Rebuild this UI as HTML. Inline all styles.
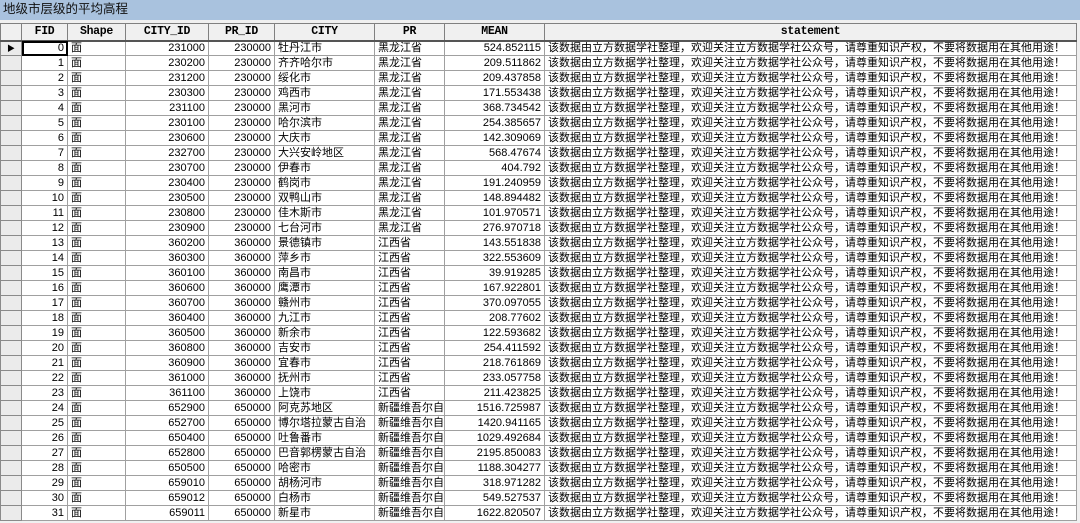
<!DOCTYPE html>
<html><head><meta charset="utf-8"><style>
*{margin:0;padding:0;box-sizing:border-box}
body{width:1080px;height:523px;overflow:hidden;background:#f0f0f0;font-family:"Liberation Sans","Noto Sans CJK SC",sans-serif;font-size:11px;color:#000;position:relative}
.title{position:absolute;left:0;top:0;width:1080px;height:20px;background:#a9c2de;font-size:12.5px;line-height:18px;padding-left:3px;color:#111}
table{position:absolute;left:0;top:23px;border-collapse:collapse;table-layout:fixed;width:1076px;background:#fff}
td,th{border:1px solid #a0a0a0;height:15px;line-height:13px;padding:0 3px;white-space:nowrap;overflow:hidden}
th{background:#f0f0f0;font-family:"Liberation Mono","DejaVu Sans Mono",monospace;font-weight:bold;font-size:11.5px;letter-spacing:-0.3px;height:17px;border:1px solid #808080;border-bottom:2px solid #555}
td.s{background:#ebebeb;border:1px solid #8a8a8a;padding:0;font-size:8px;text-align:center}
td.r{text-align:right}
</style></head><body>
<div class="title">地级市层级的平均高程</div>
<table>
<colgroup><col style="width:21px"><col style="width:46px"><col style="width:58px"><col style="width:83px"><col style="width:66px"><col style="width:100px"><col style="width:70px"><col style="width:100px"><col style="width:532px"></colgroup>
<tr><th></th><th>FID</th><th>Shape</th><th>CITY_ID</th><th>PR_ID</th><th>CITY</th><th>PR</th><th>MEAN</th><th>statement</th></tr>
<tbody id="b"></tbody>
</table>
<script>
var d=[["231000","230000","牡丹江市","黑龙江省","524.852115"],["230200","230000","齐齐哈尔市","黑龙江省","209.511862"],["231200","230000","绥化市","黑龙江省","209.437858"],["230300","230000","鸡西市","黑龙江省","171.553438"],["231100","230000","黑河市","黑龙江省","368.734542"],["230100","230000","哈尔滨市","黑龙江省","254.385657"],["230600","230000","大庆市","黑龙江省","142.309069"],["232700","230000","大兴安岭地区","黑龙江省","568.47674"],["230700","230000","伊春市","黑龙江省","404.792"],["230400","230000","鹤岗市","黑龙江省","191.240959"],["230500","230000","双鸭山市","黑龙江省","148.894482"],["230800","230000","佳木斯市","黑龙江省","101.970571"],["230900","230000","七台河市","黑龙江省","276.970718"],["360200","360000","景德镇市","江西省","143.551838"],["360300","360000","萍乡市","江西省","322.553609"],["360100","360000","南昌市","江西省","39.919285"],["360600","360000","鹰潭市","江西省","167.922801"],["360700","360000","赣州市","江西省","370.097055"],["360400","360000","九江市","江西省","208.77602"],["360500","360000","新余市","江西省","122.593682"],["360800","360000","吉安市","江西省","254.411592"],["360900","360000","宜春市","江西省","218.761869"],["361000","360000","抚州市","江西省","233.057758"],["361100","360000","上饶市","江西省","211.423825"],["652900","650000","阿克苏地区","新疆维吾尔自","1516.725987"],["652700","650000","博尔塔拉蒙古自治","新疆维吾尔自","1420.941165"],["650400","650000","吐鲁番市","新疆维吾尔自","1029.492684"],["652800","650000","巴音郭楞蒙古自治","新疆维吾尔自","2195.850083"],["650500","650000","哈密市","新疆维吾尔自","1188.304277"],["659010","650000","胡杨河市","新疆维吾尔自","318.971282"],["659012","650000","白杨市","新疆维吾尔自","549.527537"],["659011","650000","新星市","新疆维吾尔自","1622.820507"]];
var st="该数据由立方数据学社整理，欢迎关注立方数据学社公众号，请尊重知识产权，不要将数据用在其他用途！";
var h="";d.forEach(function(r,i){h+='<tr><td class="s">'+(i==0?"&#9654;":"")+'</td><td class="r"'+(i==0?' style="outline:2px solid #000;outline-offset:-2px"':'')+'>'+i+'</td><td>面</td><td class="r">'+r[0]+'</td><td class="r">'+r[1]+'</td><td>'+r[2]+'</td><td>'+r[3]+'</td><td class="r">'+r[4]+'</td><td>'+st+'</td></tr>';});
document.getElementById("b").innerHTML=h;
</script>
</body></html>
